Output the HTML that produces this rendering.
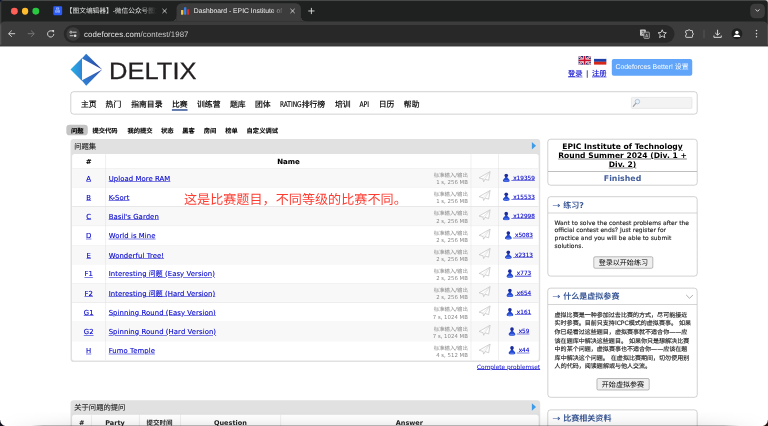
<!DOCTYPE html>
<html lang="zh">
<head>
<meta charset="utf-8">
<title>Dashboard - EPIC Institute of Technology Round Summer 2024 (Div. 1 + Div. 2) - Codeforces</title>
<style>
html,body{margin:0;padding:0;width:768px;height:426px;overflow:hidden;background:#fff;}
#root{position:absolute;left:0;top:0;width:1470px;height:816px;transform:scale(0.522449);transform-origin:0 0;overflow:hidden;background:#fff;
  font-family:"DejaVu Sans","Noto Sans CJK SC",sans-serif;color:#222;}
#root *{box-sizing:border-box;}
.abs{position:absolute;}
a{color:#0000cc;text-decoration:underline;}
.c1 a,.c2 a,.c4 a{-webkit-text-stroke:0.2px #0000cc;}

/* ---------- browser chrome ---------- */
#tabstrip{position:absolute;left:0;top:0;width:1470px;height:56px;background:#1f2020;}
#toolbar{position:absolute;left:0;top:41px;width:1470px;height:47px;background:#3c3c3c;border-radius:9px 9px 0 0;}
.ui{font-family:"Liberation Sans","Noto Sans CJK SC",sans-serif;}
.light{position:absolute;top:15px;width:12.6px;height:12.6px;border-radius:50%;}
#tab1{position:absolute;left:88px;top:6px;width:246px;height:30px;border-radius:9px;background:#232424;}
#tab2{position:absolute;left:338px;top:6px;width:238px;height:35px;border-radius:10px 10px 0 0;background:#3c3c3c;}
#tab2:before,#tab2:after{content:"";position:absolute;bottom:0;width:10px;height:10px;background:radial-gradient(circle at 0 0,rgba(60,60,60,0) 9.5px,#3c3c3c 10px);}
#tab2:before{left:-10px;}
#tab2:after{right:-10px;transform:scaleX(-1);}
.tabtitle{position:absolute;top:12.5px;font-size:13px;line-height:15px;color:#e3e3e3;white-space:nowrap;overflow:hidden;}
#omni{position:absolute;left:122px;top:47.500px;width:1169px;height:34px;border-radius:17px;background:#282828;}
#url{position:absolute;left:160.5px;top:55.5px;font-size:15.1px;line-height:18px;color:#e3e3e3;white-space:nowrap;letter-spacing:0.100px;}
#url span{color:#c7c7c7;}

/* tiny skew: keeps geometry but switches glyph rasterisation to unhinted outlines */
.tabtitle,#url,.mi,.sm,.dt .ttl,.hrow,.row,.sb,.nh{transform:skewX(0.08deg);}
/* ---------- page ---------- */
#page{position:absolute;left:0;top:88px;width:1470px;height:728px;background:#fff;overflow:hidden;}
#menubox{position:absolute;left:135px;top:86.500px;width:1200px;height:44.500px;border:1px solid #a9a9a9;border-radius:6px;background:#fff;}
.mi{position:absolute;top:100px;font-size:15px;line-height:22px;color:#000;white-space:nowrap;-webkit-text-stroke:0.35px #000;}
.mi .cond{display:inline-block;overflow:visible;font-family:"DejaVu Sans Condensed","DejaVu Sans",sans-serif;}
.sm{position:absolute;top:153px;font-size:12px;line-height:18px;font-weight:bold;color:#000;white-space:nowrap;-webkit-text-stroke:0.2px #000;}

/* datatable */
.dt{position:absolute;background:#e1e1e1;border-radius:6px;}
.dt .ttl{position:absolute;left:7px;top:4px;font-size:14px;line-height:22px;color:#222;white-space:nowrap;-webkit-text-stroke:0.2px #222;}
.tri{position:absolute;width:0;height:0;border-left:8px solid #3d9be9;border-top:7px solid transparent;border-bottom:7px solid transparent;}
#ptable{position:absolute;left:3.500px;top:29.3px;width:892.500px;height:395.500px;background:#fff;border-radius:5px;overflow:hidden;}
.hrow{position:absolute;left:0;top:0;width:100%;height:27.75px;border-bottom:1px solid #e1e1e1;font-weight:bold;font-size:13.4px;color:#000;-webkit-text-stroke:0.15px #000;}
.row{position:absolute;left:0;width:100%;height:36.75px;border-bottom:1px solid #e1e1e1;background:#fff;}
.row.dark{background:#f8f8f8;}
.vline{position:absolute;top:0;width:1px;height:100%;background:#e1e1e1;}
.c1{position:absolute;left:0;top:0;width:63.5px;height:100%;text-align:center;font-size:13.2px;letter-spacing:0.1px;line-height:37px;}
.c2{position:absolute;left:70px;top:0;height:100%;font-size:13.2px;letter-spacing:0.12px;line-height:37px;white-space:nowrap;}
.c2r{position:absolute;right:135px;top:5.3px;text-align:right;font-size:10.3px;line-height:14px;color:#888;white-space:nowrap;}
.c3{position:absolute;left:763.500px;top:0;width:52.500px;height:100%;text-align:center;}
.plane{position:absolute;left:0;top:0;width:52.5px;height:36.75px;}
.c4{position:absolute;left:816.75px;top:0;width:76.5px;height:100%;text-align:center;font-size:11px;line-height:35px;white-space:nowrap;}
.usr{width:14px;height:17px;vertical-align:-4.75px;margin-right:2.5px;}

/* sidebar */
.sb{position:absolute;left:1048px;width:287px;border:1px solid #a9a9a9;border-radius:6px;background:#fff;}
.sb .cap{position:absolute;left:9px;font-size:15.4px;font-weight:bold;color:#3b5998;white-space:nowrap;line-height:20px;}
.sb .hr{position:absolute;left:0;width:100%;height:1px;background:#ababab;}
.ar{font-weight:normal;display:inline-block;transform:scaleX(1.220);transform-origin:0 50%;margin-left:-1.200px;margin-right:2.950px;}
.btn{position:absolute;border:1px solid #7d7d7d;border-radius:3px;background:#efefef;font-size:13.500px;line-height:19px;text-align:center;color:#000;white-space:nowrap;font-family:"Liberation Sans","Noto Sans CJK SC",sans-serif;}
</style>
</head>
<body>
<div id="root">

<!-- ================= browser chrome ================= -->
<div id="tabstrip" class="ui">
  <div class="light" style="left:21px;background:#fe5f57;"></div>
  <div class="light" style="left:41.500px;background:#febc2e;"></div>
  <div class="light" style="left:62px;background:#28c840;"></div>

    <div class="abs nh" style="left:102px;top:12px;width:17px;height:17px;background:#2b5cf6;border-radius:2px;color:#dbe6ff;font-size:10px;line-height:16.500px;text-align:center;">品</div>
  <div class="tabtitle" style="left:125.500px;width:175px;font-size:12.800px;-webkit-mask-image:linear-gradient(90deg,#000 80%,transparent 100%);mask-image:linear-gradient(90deg,#000 80%,transparent 100%);">【图文编辑器】-微信公众号图文编辑</div>
  <svg class="abs" style="left:309px;top:15px" width="12" height="12" viewBox="0 0 12 12"><path d="M2 2L10 10M10 2L2 10" stroke="#e3e3e3" stroke-width="1.600" fill="none"/></svg>

  <div id="tab2"></div>
  <svg class="abs" style="left:346px;top:12px" width="17" height="17" viewBox="0 0 17 17"><rect x="0.500" y="7" width="4.500" height="9" rx="1" fill="#f6c43d"/><rect x="6.200" y="2" width="4.500" height="14" rx="1" fill="#3b7de0"/><rect x="12" y="5.500" width="4.500" height="10.500" rx="1" fill="#d32a2a"/></svg>
  <div class="tabtitle" style="left:371px;width:174px;color:#f1f1f1;-webkit-mask-image:linear-gradient(90deg,#000 86%,transparent 100%);mask-image:linear-gradient(90deg,#000 86%,transparent 100%);">Dashboard - EPIC Institute of Technology</div>
  <svg class="abs" style="left:554px;top:15px" width="12" height="12" viewBox="0 0 12 12"><path d="M2 2L10 10M10 2L2 10" stroke="#e3e3e3" stroke-width="1.600" fill="none"/></svg>
  <svg class="abs" style="left:589px;top:14px" width="14" height="14" viewBox="0 0 14 14"><path d="M7 1V13M1 7H13" stroke="#e3e3e3" stroke-width="1.700" fill="none"/></svg>

  <div class="abs" style="left:1435.500px;top:6.500px;width:28px;height:28px;border-radius:9px;background:#3c3c3c;"></div>
  <svg class="abs" style="left:1443.500px;top:13.500px" width="12" height="12" viewBox="0 0 12 12"><path d="M2.300 4L6 7.700L9.700 4" stroke="#e3e3e3" stroke-width="1.800" fill="none"/></svg>
</div>

<div id="toolbar" class="ui"></div>
<div class="abs" style="left:0;top:0;width:1470px;height:3px;background:linear-gradient(180deg,rgba(255,255,255,0.260),rgba(255,255,255,0));"></div>
<div class="abs" style="left:0;top:0;width:2.500px;height:88px;background:linear-gradient(90deg,rgba(255,255,255,0.160),rgba(255,255,255,0.050));"></div>
<div class="abs" style="left:1467.500px;top:0;width:2.500px;height:88px;background:linear-gradient(270deg,rgba(255,255,255,0.160),rgba(255,255,255,0.050));"></div>
<div class="abs" style="left:0;top:0;width:6px;height:6px;background:radial-gradient(circle at 100% 100%,rgba(10,20,48,0) 5px,#0a1430 6.500px);"></div>
<div class="abs" style="left:1464px;top:0;width:6px;height:6px;background:radial-gradient(circle at 0 100%,rgba(215,205,208,0) 5px,#d7cdd0 6.500px);"></div>
<!-- nav icons -->
<svg class="abs" style="left:14px;top:56px" width="17" height="17" viewBox="0 0 17 17"><path d="M15 8.500H2.500M8.500 2.500L2.500 8.500L8.500 14.500" stroke="#d8d8d8" stroke-width="1.800" fill="none"/></svg>
<svg class="abs" style="left:50.500px;top:56px" width="17" height="17" viewBox="0 0 17 17"><path d="M2 8.500H14.500M8.500 2.500L14.500 8.500L8.500 14.500" stroke="#7a7a7a" stroke-width="1.800" fill="none"/></svg>
<svg class="abs" style="left:87.500px;top:55.500px" width="18" height="18" viewBox="0 0 18 18"><path d="M15 9A6 6 0 1 1 12.800 4.300" stroke="#d8d8d8" stroke-width="1.800" fill="none"/><path d="M10.500 1.500H15.500V6.500Z" fill="#d8d8d8"/></svg>
<div id="omni"></div>
<div class="abs" style="left:127px;top:51.500px;width:26px;height:26px;border-radius:13px;background:#3c3c3c;"></div>
<svg class="abs" style="left:132px;top:56.5px" width="16" height="16" viewBox="0 0 16 16"><path d="M6.8 4.6H14.5M1.500 11.400H8.600" stroke="#e3e3e3" stroke-width="1.700" fill="none"/><circle cx="3.800" cy="4.600" r="2" fill="none" stroke="#e3e3e3" stroke-width="1.500"/><circle cx="11.800" cy="11.400" r="2.500" fill="#e3e3e3"/></svg>
<div id="url" class="ui">codeforces.com<span>/contest/1987</span></div>
<!-- right icons -->
<svg class="abs" style="left:1224px;top:54.500px" width="20" height="20" viewBox="0 0 20 20"><rect x="1" y="1.500" width="11" height="12" rx="1.500" fill="#c9c9c9"/><rect x="8.500" y="6.500" width="10.500" height="12" rx="1.500" fill="#3c3c3c" stroke="#c9c9c9" stroke-width="1.300"/><path d="M4 5H9M6.500 4V5M8.500 5C8 8 6 9.500 4 10.500M5 7C6 9 7.500 10 9 10.500" stroke="#282828" stroke-width="1" fill="none"/><path d="M11.500 16.500L13.800 10L16 16.500M12.300 14.500H15.200" stroke="#c9c9c9" stroke-width="1.100" fill="none"/></svg>
<svg class="abs" style="left:1257.500px;top:54.500px" width="19" height="19" viewBox="0 0 19 19"><path d="M9.500 2L11.800 7.200L17.400 7.700L13.200 11.400L14.500 17L9.500 14L4.500 17L5.800 11.400L1.600 7.700L7.200 7.200Z" stroke="#e3e3e3" stroke-width="1.600" fill="none" stroke-linejoin="round"/></svg>
<svg class="abs" style="left:1308.500px;top:54.500px" width="20" height="20" viewBox="0 0 20 20"><path d="M4.500 3.500H8.200A1.800 1.800 0 0 1 11.800 3.500H15.500Q16.500 3.500 16.500 4.500V8.200A1.800 1.800 0 0 1 16.500 11.800V15.500Q16.500 16.500 15.500 16.500H4.500Q3.500 16.500 3.500 15.500V11.800A1.800 1.800 0 0 0 3.500 8.200V4.500Q3.500 3.500 4.500 3.500Z" stroke="#dedede" stroke-width="1.700" fill="none" stroke-linejoin="round"/></svg>
<div class="abs" style="left:1346.500px;top:56.500px;width:1.500px;height:16px;background:#6a6a6a;"></div>
<svg class="abs" style="left:1363.500px;top:55px" width="19" height="19" viewBox="0 0 19 19"><path d="M9.500 2V12M5 8L9.500 12.500L14 8M2.500 13V16.500H16.500V13" stroke="#e3e3e3" stroke-width="1.800" fill="none"/></svg>
<div class="abs" style="left:1400px;top:54px;width:21px;height:21px;border-radius:50%;background:#1f2020;"></div>
<svg class="abs" style="left:1400px;top:54px" width="21" height="21" viewBox="0 0 21 21"><circle cx="10.500" cy="8" r="3.300" fill="#fff"/><path d="M4 17C4.500 13.500 7 12.500 10.500 12.500S16.500 13.500 17 17Z" fill="#fff"/></svg>
<svg class="abs" style="left:1445px;top:55px" width="6" height="19" viewBox="0 0 6 19"><circle cx="3" cy="3.500" r="1.400" fill="#e3e3e3"/><circle cx="3" cy="9.500" r="1.400" fill="#e3e3e3"/><circle cx="3" cy="15.500" r="1.400" fill="#e3e3e3"/></svg>

<!-- ================= page ================= -->
<div id="page">
  <!-- logo -->
  <svg class="abs nh" style="left:130px;top:10px" width="260" height="72" viewBox="0 0 260 72">
    <defs>
      <linearGradient id="gl" x1="0" y1="0" x2="1" y2="0"><stop offset="0" stop-color="#27aee4"/><stop offset="1" stop-color="#2f86d6"/></linearGradient>
      <linearGradient id="gt" x1="0" y1="0" x2="1" y2="1"><stop offset="0" stop-color="#2f80d4"/><stop offset="1" stop-color="#2a3c9c"/></linearGradient>
      <linearGradient id="gb" x1="0" y1="1" x2="1" y2="0"><stop offset="0" stop-color="#2f86d8"/><stop offset="1" stop-color="#3150b0"/></linearGradient>
    </defs>
    <polygon points="4.9,35 27,13 27,57" fill="url(#gl)"/>
    <polygon points="27,13.3 35,5 65.6,35 27,14.2" fill="url(#gt)"/>
    <polygon points="27,56.7 35,66 65.6,35 27,55.800" fill="url(#gb)"/>
    <text x="78.700" y="52.600" font-family="Liberation Sans, sans-serif" font-size="45.500" fill="#231f20" stroke="#231f20" stroke-width="0.500" textLength="167.500" lengthAdjust="spacingAndGlyphs">DELTIX</text>
  </svg>

  <!-- header right -->
  <svg class="abs" style="left:1106.500px;top:18.500px" width="24" height="17" viewBox="0 0 24 17"><rect width="24" height="17" fill="#1f2a6b"/><path d="M0 0L24 17M24 0L0 17" stroke="#fff" stroke-width="3.400"/><path d="M0 0L24 17M24 0L0 17" stroke="#c8102e" stroke-width="1.300"/><path d="M12 0V17M0 8.500H24" stroke="#fff" stroke-width="5.500"/><path d="M12 0V17M0 8.500H24" stroke="#c8102e" stroke-width="3.200"/></svg>
  <svg class="abs" style="left:1136.500px;top:18.500px" width="24" height="17" viewBox="0 0 24 17"><rect width="24" height="17" fill="#e8e8e8"/><rect y="0.500" x="0.500" width="23" height="5.500" fill="#fff"/><rect y="5.700" width="24" height="5.600" fill="#1c3fa8"/><rect y="11.300" width="24" height="5.700" fill="#d62718"/></svg>
  <div class="abs nh" style="left:1087px;top:43px;font-size:14px;line-height:20px;white-space:nowrap;color:#222;-webkit-text-stroke:0.2px #0000cc;"><a>登录</a><span style="display:inline-block;width:18px;text-align:center;">|</span><a>注册</a></div>
  <div class="abs ui nh" style="left:1171px;top:24.500px;width:154px;height:31.500px;border-radius:4px;background:#60a5fa;color:#fff;font-size:13.2px;line-height:32.6px;text-align:center;white-space:nowrap;overflow:hidden;">Codeforces Better! 设置</div>

  <!-- main menu -->
  <div id="menubox"></div>
  <div class="mi" style="left:154.500px">主页</div>
  <div class="mi" style="left:202px">热门</div>
  <div class="mi" style="left:250.500px">指南目录</div>
  <div class="mi" style="left:329px">比赛</div>
  <div class="abs" style="left:329px;top:121px;width:30px;height:3px;background:#3b5998;"></div>
  <div class="mi" style="left:376.500px">训练营</div>
  <div class="mi" style="left:440px">题库</div>
  <div class="mi" style="left:487.500px">团体</div>
  <div class="mi" style="left:535.500px"><svg class="cond" width="41.400" height="16" viewBox="0 0 41.400 16" style="vertical-align:-3px"><text x="0" y="14" font-size="15.200" textLength="41.200" lengthAdjust="spacingAndGlyphs" fill="#000" stroke="#000" stroke-width="0.300">RATING</text></svg>排行榜</div>
  <div class="mi" style="left:640.500px">培训</div>
  <div class="mi" style="left:688px"><svg class="cond" width="18.600" height="16" viewBox="0 0 18.600 16" style="vertical-align:-3px"><text x="0" y="14" font-size="15.200" textLength="18.400" lengthAdjust="spacingAndGlyphs" fill="#000" stroke="#000" stroke-width="0.300">API</text></svg></div>
  <div class="mi" style="left:724.500px">日历</div>
  <div class="mi" style="left:772.500px">帮助</div>
  <div class="abs" style="left:1207.500px;top:98px;width:117px;height:22px;background:#f3f3f3;border:1px solid #dcdcdc;border-radius:2px;"></div>
  <svg class="abs" style="left:1210px;top:100px" width="17" height="17" viewBox="0 0 17 17"><circle cx="10" cy="6.500" r="4.300" fill="#e3f1fb" stroke="#a8b8c9" stroke-width="1.400"/><path d="M7 10L2 15.500" stroke="#9a9fa8" stroke-width="2.200" stroke-linecap="round"/></svg>

  <!-- second level menu -->
  <div class="abs" style="left:127.300px;top:150.800px;width:40.700px;height:20.700px;border-radius:6px;background:#c4c4c4;"></div>
  <div class="sm" style="left:136px">问题</div>
  <div class="sm" style="left:177px">提交代码</div>
  <div class="sm" style="left:243.500px">我的提交</div>
  <div class="sm" style="left:308px">状态</div>
  <div class="sm" style="left:349px">黑客</div>
  <div class="sm" style="left:390px">房间</div>
  <div class="sm" style="left:430.500px">榜单</div>
  <div class="sm" style="left:472px">自定义调试</div>

  <!-- problems datatable -->
  <div class="dt" style="left:134.500px;top:177.500px;width:899px;height:427px;">
    <div class="ttl">问题集</div>
    <div class="tri" style="left:883.500px;top:6px;"></div>
    <div id="ptable">
      <div class="hrow"><div class="abs" style="left:0;width:63.500px;text-align:center;line-height:27.3px;">#</div><div class="abs" style="left:64.800px;width:699px;text-align:center;line-height:27.3px;">Name</div></div>
<div class="row dark" style="top:27.75px">
<div class="c1"><a>A</a></div>
<div class="c2"><a>Upload More RAM</a></div>
<div class="c2r"><div>标准输入/输出</div><div>1 s, 256 MB</div></div>
<div class="c3"><svg class="plane" viewBox="0 0 52.5 36.75"><path d="M15 17.450L36 5.600L33.300 22.200L26.400 19.900L23.750 24.800L22.500 19.550Z" fill="#fff" stroke="#bcbcbc" stroke-width="1.250" stroke-linejoin="round"/><path d="M22.500 19.550L36 5.600L26.400 19.900" fill="none" stroke="#cfcfcf" stroke-width="0.900"/></svg></div>
<div class="c4"><a><svg class="usr" viewBox="0 0 14 17"><path d="M5.300 6C5.300 10 1 10.300 0.400 13.600C0.400 15.700 3.400 16.700 7 16.700S13.600 15.700 13.600 13.600C13 10.300 8.700 10 8.700 6Z" fill="#2548d0"/><ellipse cx="7" cy="14.200" rx="5" ry="1.600" fill="#4f74ea"/><circle cx="7" cy="4" r="3.500" fill="#1b2c98"/></svg><span>&nbsp;x19359</span></a></div>
</div>
<div class="row" style="top:64.50px">
<div class="c1"><a>B</a></div>
<div class="c2"><a>K-Sort</a></div>
<div class="c2r"><div>标准输入/输出</div><div>1 s, 256 MB</div></div>
<div class="c3"><svg class="plane" viewBox="0 0 52.5 36.75"><path d="M15 17.450L36 5.600L33.300 22.200L26.400 19.900L23.750 24.800L22.500 19.550Z" fill="#fff" stroke="#bcbcbc" stroke-width="1.250" stroke-linejoin="round"/><path d="M22.500 19.550L36 5.600L26.400 19.900" fill="none" stroke="#cfcfcf" stroke-width="0.900"/></svg></div>
<div class="c4"><a><svg class="usr" viewBox="0 0 14 17"><path d="M5.300 6C5.300 10 1 10.300 0.400 13.600C0.400 15.700 3.400 16.700 7 16.700S13.600 15.700 13.600 13.600C13 10.300 8.700 10 8.700 6Z" fill="#2548d0"/><ellipse cx="7" cy="14.200" rx="5" ry="1.600" fill="#4f74ea"/><circle cx="7" cy="4" r="3.500" fill="#1b2c98"/></svg><span>&nbsp;x15533</span></a></div>
</div>
<div class="row dark" style="top:101.25px">
<div class="c1"><a>C</a></div>
<div class="c2"><a>Basil's Garden</a></div>
<div class="c2r"><div>标准输入/输出</div><div>2 s, 256 MB</div></div>
<div class="c3"><svg class="plane" viewBox="0 0 52.5 36.75"><path d="M15 17.450L36 5.600L33.300 22.200L26.400 19.900L23.750 24.800L22.500 19.550Z" fill="#fff" stroke="#bcbcbc" stroke-width="1.250" stroke-linejoin="round"/><path d="M22.500 19.550L36 5.600L26.400 19.900" fill="none" stroke="#cfcfcf" stroke-width="0.900"/></svg></div>
<div class="c4"><a><svg class="usr" viewBox="0 0 14 17"><path d="M5.300 6C5.300 10 1 10.300 0.400 13.600C0.400 15.700 3.400 16.700 7 16.700S13.600 15.700 13.600 13.600C13 10.300 8.700 10 8.700 6Z" fill="#2548d0"/><ellipse cx="7" cy="14.200" rx="5" ry="1.600" fill="#4f74ea"/><circle cx="7" cy="4" r="3.500" fill="#1b2c98"/></svg><span>&nbsp;x12998</span></a></div>
</div>
<div class="row" style="top:138.00px">
<div class="c1"><a>D</a></div>
<div class="c2"><a>World is Mine</a></div>
<div class="c2r"><div>标准输入/输出</div><div>2 s, 256 MB</div></div>
<div class="c3"><svg class="plane" viewBox="0 0 52.5 36.75"><path d="M15 17.450L36 5.600L33.300 22.200L26.400 19.900L23.750 24.800L22.500 19.550Z" fill="#fff" stroke="#bcbcbc" stroke-width="1.250" stroke-linejoin="round"/><path d="M22.500 19.550L36 5.600L26.400 19.900" fill="none" stroke="#cfcfcf" stroke-width="0.900"/></svg></div>
<div class="c4"><a><svg class="usr" viewBox="0 0 14 17"><path d="M5.300 6C5.300 10 1 10.300 0.400 13.600C0.400 15.700 3.400 16.700 7 16.700S13.600 15.700 13.600 13.600C13 10.300 8.700 10 8.700 6Z" fill="#2548d0"/><ellipse cx="7" cy="14.200" rx="5" ry="1.600" fill="#4f74ea"/><circle cx="7" cy="4" r="3.500" fill="#1b2c98"/></svg><span>&nbsp;x5083</span></a></div>
</div>
<div class="row dark" style="top:174.75px">
<div class="c1"><a>E</a></div>
<div class="c2"><a>Wonderful Tree!</a></div>
<div class="c2r"><div>标准输入/输出</div><div>2 s, 256 MB</div></div>
<div class="c3"><svg class="plane" viewBox="0 0 52.5 36.75"><path d="M15 17.450L36 5.600L33.300 22.200L26.400 19.900L23.750 24.800L22.500 19.550Z" fill="#fff" stroke="#bcbcbc" stroke-width="1.250" stroke-linejoin="round"/><path d="M22.500 19.550L36 5.600L26.400 19.900" fill="none" stroke="#cfcfcf" stroke-width="0.900"/></svg></div>
<div class="c4"><a><svg class="usr" viewBox="0 0 14 17"><path d="M5.300 6C5.300 10 1 10.300 0.400 13.600C0.400 15.700 3.400 16.700 7 16.700S13.600 15.700 13.600 13.600C13 10.300 8.700 10 8.700 6Z" fill="#2548d0"/><ellipse cx="7" cy="14.200" rx="5" ry="1.600" fill="#4f74ea"/><circle cx="7" cy="4" r="3.500" fill="#1b2c98"/></svg><span>&nbsp;x2313</span></a></div>
</div>
<div class="row" style="top:211.50px">
<div class="c1"><a>F1</a></div>
<div class="c2"><a>Interesting 问题 (Easy Version)</a></div>
<div class="c2r"><div>标准输入/输出</div><div>2 s, 256 MB</div></div>
<div class="c3"><svg class="plane" viewBox="0 0 52.5 36.75"><path d="M15 17.450L36 5.600L33.300 22.200L26.400 19.900L23.750 24.800L22.500 19.550Z" fill="#fff" stroke="#bcbcbc" stroke-width="1.250" stroke-linejoin="round"/><path d="M22.500 19.550L36 5.600L26.400 19.900" fill="none" stroke="#cfcfcf" stroke-width="0.900"/></svg></div>
<div class="c4"><a><svg class="usr" viewBox="0 0 14 17"><path d="M5.300 6C5.300 10 1 10.300 0.400 13.600C0.400 15.700 3.400 16.700 7 16.700S13.600 15.700 13.600 13.600C13 10.300 8.700 10 8.700 6Z" fill="#2548d0"/><ellipse cx="7" cy="14.200" rx="5" ry="1.600" fill="#4f74ea"/><circle cx="7" cy="4" r="3.500" fill="#1b2c98"/></svg><span>&nbsp;x773</span></a></div>
</div>
<div class="row dark" style="top:248.25px">
<div class="c1"><a>F2</a></div>
<div class="c2"><a>Interesting 问题 (Hard Version)</a></div>
<div class="c2r"><div>标准输入/输出</div><div>2 s, 256 MB</div></div>
<div class="c3"><svg class="plane" viewBox="0 0 52.5 36.75"><path d="M15 17.450L36 5.600L33.300 22.200L26.400 19.900L23.750 24.800L22.500 19.550Z" fill="#fff" stroke="#bcbcbc" stroke-width="1.250" stroke-linejoin="round"/><path d="M22.500 19.550L36 5.600L26.400 19.900" fill="none" stroke="#cfcfcf" stroke-width="0.900"/></svg></div>
<div class="c4"><a><svg class="usr" viewBox="0 0 14 17"><path d="M5.300 6C5.300 10 1 10.300 0.400 13.600C0.400 15.700 3.400 16.700 7 16.700S13.600 15.700 13.600 13.600C13 10.300 8.700 10 8.700 6Z" fill="#2548d0"/><ellipse cx="7" cy="14.200" rx="5" ry="1.600" fill="#4f74ea"/><circle cx="7" cy="4" r="3.500" fill="#1b2c98"/></svg><span>&nbsp;x654</span></a></div>
</div>
<div class="row" style="top:285.00px">
<div class="c1"><a>G1</a></div>
<div class="c2"><a>Spinning Round (Easy Version)</a></div>
<div class="c2r"><div>标准输入/输出</div><div>7 s, 1024 MB</div></div>
<div class="c3"><svg class="plane" viewBox="0 0 52.5 36.75"><path d="M15 17.450L36 5.600L33.300 22.200L26.400 19.900L23.750 24.800L22.500 19.550Z" fill="#fff" stroke="#bcbcbc" stroke-width="1.250" stroke-linejoin="round"/><path d="M22.500 19.550L36 5.600L26.400 19.900" fill="none" stroke="#cfcfcf" stroke-width="0.900"/></svg></div>
<div class="c4"><a><svg class="usr" viewBox="0 0 14 17"><path d="M5.300 6C5.300 10 1 10.300 0.400 13.600C0.400 15.700 3.400 16.700 7 16.700S13.600 15.700 13.600 13.600C13 10.300 8.700 10 8.700 6Z" fill="#2548d0"/><ellipse cx="7" cy="14.200" rx="5" ry="1.600" fill="#4f74ea"/><circle cx="7" cy="4" r="3.500" fill="#1b2c98"/></svg><span>&nbsp;x161</span></a></div>
</div>
<div class="row dark" style="top:321.75px">
<div class="c1"><a>G2</a></div>
<div class="c2"><a>Spinning Round (Hard Version)</a></div>
<div class="c2r"><div>标准输入/输出</div><div>7 s, 1024 MB</div></div>
<div class="c3"><svg class="plane" viewBox="0 0 52.5 36.75"><path d="M15 17.450L36 5.600L33.300 22.200L26.400 19.900L23.750 24.800L22.500 19.550Z" fill="#fff" stroke="#bcbcbc" stroke-width="1.250" stroke-linejoin="round"/><path d="M22.500 19.550L36 5.600L26.400 19.900" fill="none" stroke="#cfcfcf" stroke-width="0.900"/></svg></div>
<div class="c4"><a><svg class="usr" viewBox="0 0 14 17"><path d="M5.300 6C5.300 10 1 10.300 0.400 13.600C0.400 15.700 3.400 16.700 7 16.700S13.600 15.700 13.600 13.600C13 10.300 8.700 10 8.700 6Z" fill="#2548d0"/><ellipse cx="7" cy="14.200" rx="5" ry="1.600" fill="#4f74ea"/><circle cx="7" cy="4" r="3.500" fill="#1b2c98"/></svg><span>&nbsp;x59</span></a></div>
</div>
<div class="row" style="top:358.50px">
<div class="c1"><a>H</a></div>
<div class="c2"><a>Fumo Temple</a></div>
<div class="c2r"><div>标准输入/输出</div><div>4 s, 512 MB</div></div>
<div class="c3"><svg class="plane" viewBox="0 0 52.5 36.75"><path d="M15 17.450L36 5.600L33.300 22.200L26.400 19.900L23.750 24.800L22.500 19.550Z" fill="#fff" stroke="#bcbcbc" stroke-width="1.250" stroke-linejoin="round"/><path d="M22.500 19.550L36 5.600L26.400 19.900" fill="none" stroke="#cfcfcf" stroke-width="0.900"/></svg></div>
<div class="c4"><a><svg class="usr" viewBox="0 0 14 17"><path d="M5.300 6C5.300 10 1 10.300 0.400 13.600C0.400 15.700 3.400 16.700 7 16.700S13.600 15.700 13.600 13.600C13 10.300 8.700 10 8.700 6Z" fill="#2548d0"/><ellipse cx="7" cy="14.200" rx="5" ry="1.600" fill="#4f74ea"/><circle cx="7" cy="4" r="3.500" fill="#1b2c98"/></svg><span>&nbsp;x44</span></a></div>
</div>
      <div class="vline" style="left:63.500px"></div>
      <div class="vline" style="left:763px"></div>
      <div class="vline" style="left:815.500px"></div>
    </div>
  </div>
  <div class="abs nh" style="right:436px;top:607px;font-size:11.2px;line-height:16px;white-space:nowrap;"><a>Complete problemset</a></div>

  <!-- red annotation -->
  <div class="abs nh" style="left:351.500px;top:274.3px;font-size:25.1px;line-height:36px;color:#ff3b30;white-space:nowrap;font-family:'Noto Sans CJK SC',sans-serif;">这是比赛题目，不同等级的比赛不同。</div>

  <!-- questions datatable -->
  <div class="dt" style="left:134.500px;top:677.500px;width:899px;height:80px;">
    <div class="ttl" style="top:3px">关于问题的提问</div>
    <div class="tri" style="left:883.500px;top:6px;"></div>
    <div class="abs nh" style="left:3.500px;top:28.600px;width:892.500px;height:60px;background:#fff;border-radius:5px;overflow:hidden;font-size:12.500px;font-weight:bold;line-height:32.800px;text-align:center;">
      <div class="abs" style="left:0;width:36.500px;">#</div>
      <div class="abs" style="left:36.500px;width:91.500px;">Party</div>
      <div class="abs" style="left:128px;width:79px;">提交时间</div>
      <div class="abs" style="left:207.500px;width:191px;">Question</div>
      <div class="abs" style="left:398.500px;width:494px;">Answer</div>
      <div class="vline" style="left:36.500px"></div>
      <div class="vline" style="left:128px"></div>
      <div class="vline" style="left:207px"></div>
      <div class="vline" style="left:398.500px"></div>
    </div>
  </div>

  <!-- sidebar -->
  <div class="sb" style="top:178px;height:89px;">
    <div class="abs" style="left:0;top:5px;width:100%;text-align:center;font-size:14.55px;font-weight:bold;line-height:17px;color:#000;"><a style="color:#000">EPIC Institute of Technology<br>Round Summer 2024 (Div. 1 +<br>Div. 2)</a></div>
    <div class="hr" style="top:60.500px"></div>
    <div class="abs" style="left:0;top:64.500px;width:100%;text-align:center;font-size:15px;font-weight:bold;line-height:20px;color:#445f9d;">Finished</div>
  </div>

  <div class="sb" style="top:288px;height:153px;">
    <div class="cap" style="top:5.500px"><span class="ar">→</span> 练习?</div>
    <div class="hr" style="top:29.500px"></div>
    <div class="abs" style="left:12.500px;top:42.500px;width:270px;font-size:11.47px;line-height:14.600px;color:#222;-webkit-text-stroke:0.25px #222;">Want to solve the contest problems after the<br>official contest ends? Just register for<br>practice and you will be able to submit<br>solutions.</div>
    <div class="btn" style="left:87px;top:114px;width:114px;height:23px;line-height:21px;">登录以开始练习</div>
  </div>

  <div class="sb" style="top:462.500px;height:210px;">
    <div class="cap" style="top:5.500px"><span class="ar">→</span> 什么是虚拟参赛</div>
    <svg class="abs" style="left:263px;top:10px" width="16" height="12" viewBox="0 0 16 12"><path d="M1.500 2.500L8 9L14.500 2.500" stroke="#9d9d9d" stroke-width="1.600" fill="none"/></svg>
    <div class="hr" style="top:29.500px"></div>
    <div class="abs" style="left:12.500px;top:42.500px;width:266px;font-size:11.560px;line-height:16.400px;color:#222;white-space:nowrap;-webkit-text-stroke:0.25px #222;">虚拟比赛是一种参加过去比赛的方式，尽可能接近<br>实时参赛。目前只支持ICPC模式的虚拟赛事。 如果<br>你已经看过这些题目，虚拟赛事就不适合你——应<br>该在题库中解决这些题目。 如果你只是想解决比赛<br>中的某个问题，虚拟赛事也不适合你——应该在题<br>库中解决这个问题。 在虚拟比赛期间，切勿使用别<br>人的代码，阅读题解或与他人交流。</div>
    <div class="btn" style="left:93px;top:171.500px;width:100.500px;height:23px;line-height:21px;">开始虚拟参赛</div>
  </div>

  <div class="sb" style="top:696px;height:60px;">
    <div class="cap" style="top:5px"><span class="ar">→</span> 比赛相关资料</div>
  </div>

  <!-- window bottom shadow / corners -->
  <div class="abs" style="left:0;top:700px;width:1470px;height:28px;background:linear-gradient(180deg,rgba(0,0,0,0) 0%,rgba(0,0,0,0.030) 60%,rgba(0,0,0,0.075) 100%);-webkit-mask-image:linear-gradient(90deg,transparent 0,#000 9%,#000 91%,transparent 100%);mask-image:linear-gradient(90deg,transparent 0,#000 9%,#000 91%,transparent 100%);"></div>
  <div class="abs" style="left:60px;top:725.600px;width:1355px;height:2.400px;background:linear-gradient(90deg,rgba(0,0,0,0) 0,rgba(0,0,0,0.340) 22px,rgba(0,0,0,0.340) 1325px,rgba(0,0,0,0) 1355px);"></div>
  <div class="abs" style="left:0;top:716px;width:12px;height:12px;background:radial-gradient(circle at 100% 0,rgba(16,18,30,0) 10.500px,#10121e 12.500px);"></div>
  <div class="abs" style="left:1458px;top:716px;width:12px;height:12px;background:radial-gradient(circle at 0 0,rgba(40,20,16,0) 10.500px,#28140f 12.500px);"></div>
</div>
<div class="abs" style="left:0;top:86px;width:1470px;height:3px;background:#3c3c3c;transform:translateY(-0.450px);"></div>
<div class="abs" style="left:0;top:88px;width:1470px;height:1px;background:#2e2e2e;transform:translateY(-0.450px);"></div>

</div>
</body>
</html>
